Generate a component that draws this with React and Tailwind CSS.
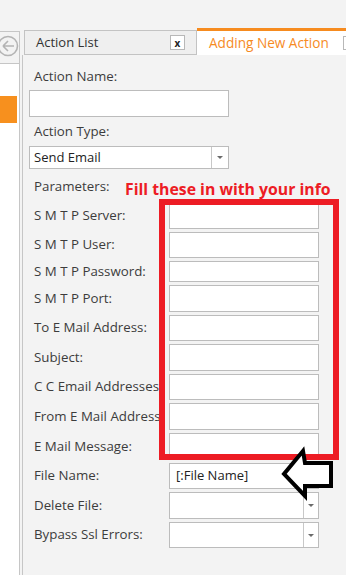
import React from 'react'

const rows = [
  { label: 'S M T P Server:', h: 'h-[26px]' },
  { label: 'S M T P User:', h: 'h-[26px]' },
  { label: 'S M T P Password:', h: 'h-[21px]' },
  { label: 'S M T P Port:', h: 'h-[27px]' },
  { label: 'To E Mail Address:', h: 'h-[26px]' },
  { label: 'Subject:', h: 'h-[27px]' },
  { label: 'C C Email Addresses', h: 'h-[26px]' },
  { label: 'From E Mail Address', h: 'h-[27px]' },
  { label: 'E Mail Message:', h: 'h-[27px]' },
  { label: 'File Name:', h: 'h-[26px]', value: '[:File Name]' },
  { label: 'Delete File:', h: 'h-[27px]', select: true },
  { label: 'Bypass Ssl Errors:', h: 'h-[26px]', select: true },
]

function Caret() {
  return <span className="block h-0 w-0 border-x-[3px] border-t-[3px] border-x-transparent border-t-[#6b6b6b]" />
}

function Field({ h, value, select }) {
  return (
    <div className={`flex w-[150px] shrink-0 border border-[#bcbcbc] bg-white ${h}`}>
      <div className="flex flex-1 items-center overflow-hidden pl-[6px] text-[13px] text-[#222]">{value}</div>
      {select && (
        <div className="flex w-[15px] items-center justify-center border-l border-[#c8c8c8]">
          <Caret />
        </div>
      )}
    </div>
  )
}

export default function App() {
  return (
    <div className="relative h-[575px] w-[346px] overflow-hidden bg-[#f3f3f3] font-['Open_Sans','Noto_Sans',sans-serif] text-[#3c3c3c]">
      <div className="flex h-full">
        {/* left rail */}
        <div className="mt-[31px] flex w-[20px] shrink-0 flex-col border-r border-t border-[#c6c6c6]">
          <div className="h-[32px] overflow-hidden border-b border-[#c6c6c6]">
            <svg width="20" height="26" viewBox="0 0 20 26" className="-ml-[1px] mt-[2px]">
              <circle cx="9" cy="12" r="9.5" fill="none" stroke="#b4b4b4" strokeWidth="1.6" />
              <path d="M4 12 H15 M4 12 L9 7 M4 12 L9 17" fill="none" stroke="#b4b4b4" strokeWidth="1.6" />
            </svg>
          </div>
          <div className="flex-1 bg-white pt-[32px]">
            <div className="h-[27px] w-[17px] bg-[#f7901e]" />
          </div>
        </div>

        <div className="ml-[2px] flex flex-1 flex-col pt-[28px]">
          {/* tabs */}
          <div className="flex h-[27px] items-end">
            <div className="ml-[2px] flex h-[25px] w-[173px] items-center border border-[#c3c3c3] bg-[#efefef] pl-[11px] pr-[11px] text-[13px] text-[#333]">
              <span className="flex-1">Action List</span>
              <span className="flex h-[15px] w-[15px] items-center justify-center border border-[#b8b8b8] bg-white text-[10px] font-bold leading-none text-[#222]">x</span>
            </div>
            <div className="flex h-[27px] flex-1 items-center border-t-[3px] border-[#f68b1f] bg-white pl-[12px] text-[13.6px] text-[#f68b1f]">
              <span className="flex-1 whitespace-nowrap">Adding New Action</span>
              <span className="h-[14px] w-[3px] border-y border-l border-[#b8b8b8]" />
            </div>
          </div>

          {/* panel */}
          <div className="flex-1 border-l border-[#c6c6c6] text-[13.3px]">
            <div className="mt-[12px] flex h-[20px] items-center pl-[11px]">Action Name:</div>
            <div className="ml-[6px] mt-[3px] h-[27px] w-[200px] border border-[#bcbcbc] bg-white" />
            <div className="mt-[5px] flex h-[20px] items-center pl-[11px]">Action Type:</div>
            <div className="ml-[6px] mt-[4px] flex h-[23px] w-[200px] border border-[#bcbcbc] bg-white">
              <div className="flex flex-1 items-center pl-[4px] text-[13px] text-[#222]">Send Email</div>
              <div className="flex w-[17px] items-center justify-center border-l border-[#c8c8c8]">
                <Caret />
              </div>
            </div>
            <div className="mt-[8px] flex h-[20px] items-center pl-[11px]">Parameters:</div>
            <div className="mt-[6px] flex flex-col gap-[3px]">
              {rows.map((r) => (
                <div key={r.label} className="flex items-center">
                  <div className="w-[146px] shrink-0 overflow-hidden whitespace-nowrap pl-[11px]">{r.label}</div>
                  <Field h={r.h} value={r.value} select={r.select} />
                </div>
              ))}
            </div>
          </div>
        </div>
      </div>

      {/* annotations */}
      <div className="absolute left-[125px] top-[178px] whitespace-nowrap text-[15.8px] font-bold text-[#ed1c24]">
        Fill these in with your info
      </div>
      <div className="pointer-events-none absolute left-[159px] top-[199px] h-[261px] w-[180px] border-[6px] border-[#ed1c24]" />
      <svg className="absolute left-[278px] top-[446px]" width="60" height="56" viewBox="0 0 60 56">
        <polygon points="25,5 6,28 27,50 27,40 53,40 53,17 27,17" fill="white" stroke="black" strokeWidth="4" strokeLinejoin="miter" />
      </svg>
    </div>
  )
}
